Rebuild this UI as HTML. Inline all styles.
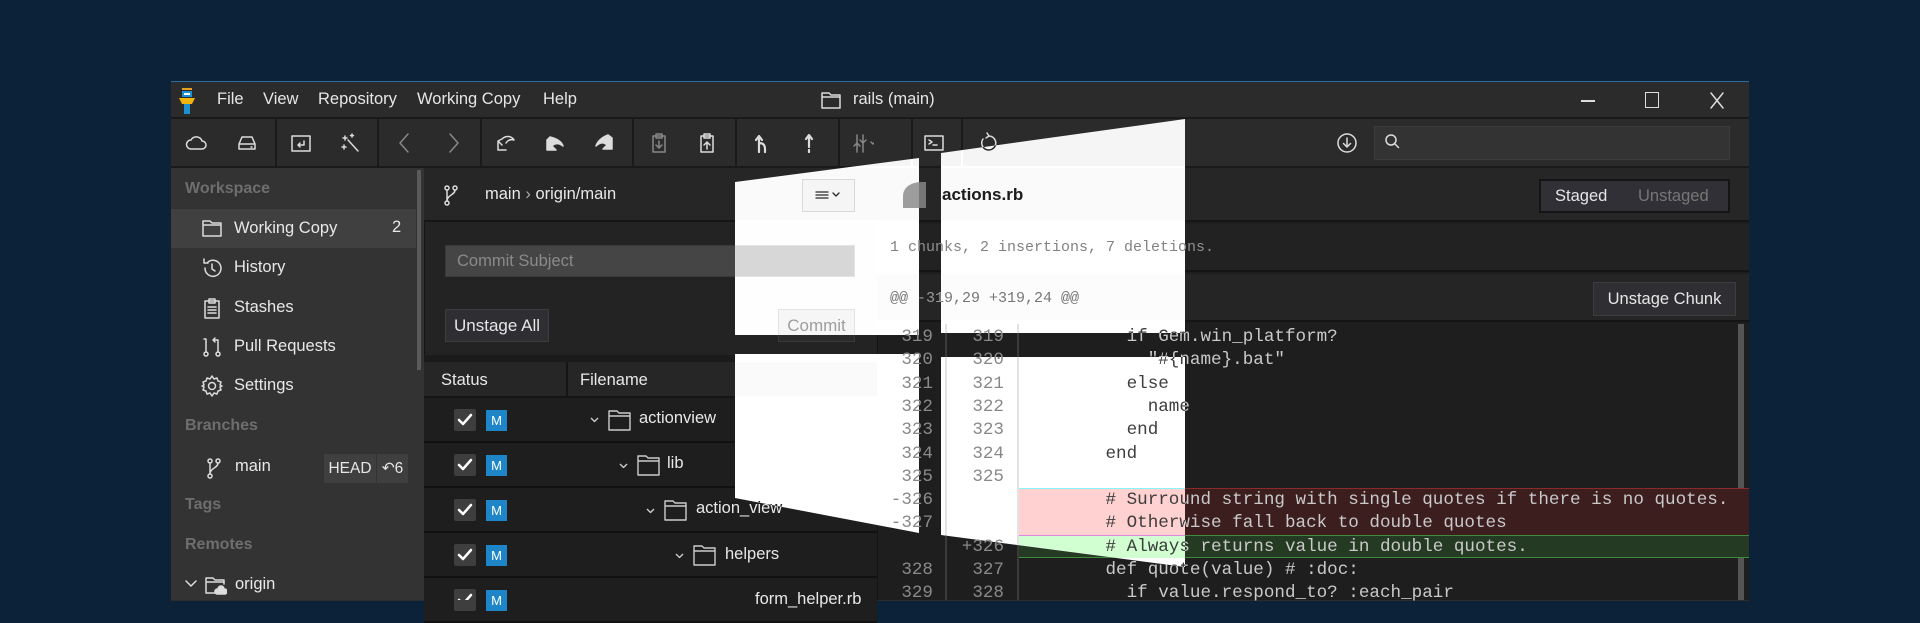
<!DOCTYPE html>
<html><head><meta charset="utf-8"><style>
*{box-sizing:border-box;margin:0;padding:0}
body{width:1920px;height:600px;background:#0b2239;position:relative;overflow:hidden;font-family:"Liberation Sans",sans-serif;color:#e6e6e6;font-size:16px}
.a{position:absolute}
.ic{position:absolute;width:24px;height:24px;fill:none;stroke:#dcdcdc;stroke-width:1.5;stroke-linecap:round;stroke-linejoin:round}
.vs{position:absolute;top:119px;width:2px;height:48px;background:#1a1a1a}
.h{position:absolute;color:#6e6e6e;font-weight:bold;font-size:16px}
.si{position:absolute;font-size:16.5px;color:#e8e8e8}
.row{position:absolute;left:424px;width:453px;height:45px;background:#1e1e1e;border-bottom:2px solid #111}
.cb{position:absolute;left:30px;top:11px;width:22px;height:22px;background:#3e3e3e;border-radius:2px}
.m{position:absolute;left:62px;top:12px;width:21px;height:21px;background:#1e86c8;color:#fff;font-size:13px;text-align:center;line-height:21px}
.mono{font-family:"Liberation Mono",monospace}
.cl{position:absolute;left:1019px;width:720px;height:23.3px;line-height:23.3px;font-size:17.6px;white-space:pre;color:#c9c9c9;padding-left:2px}
.n1,.n2{position:absolute;height:23.3px;line-height:23.3px;font-size:17.6px;color:#8a8a8a;text-align:right}
.n1{left:877px;width:56px}.n2{left:946px;width:58px}
</style></head><body>
<div class="a" style="left:171px;top:81px;width:1578px;height:520px;background:#2b2b2b;border-top:1px solid #2f6aa3"></div>
<svg class="a" style="left:179px;top:88px" width="16" height="26" viewBox="0 0 16 26"><rect x="3" y="0" width="10" height="2" fill="#e8a020"/><rect x="3" y="3" width="10" height="6" fill="#1e90d0"/><rect x="5" y="5" width="6" height="2" fill="#fff"/><path d="M0 10h16l-3 6H3z" fill="#f2b30c"/><rect x="5" y="16" width="6" height="10" fill="#1e90d0"/></svg>
<div class="a" style="left:217px;top:90px;font-size:16.5px">File</div>
<div class="a" style="left:263px;top:90px;font-size:16.5px">View</div>
<div class="a" style="left:318px;top:90px;font-size:16.5px">Repository</div>
<div class="a" style="left:417px;top:90px;font-size:16.5px">Working Copy</div>
<div class="a" style="left:543px;top:90px;font-size:16.5px">Help</div>
<svg class="ic" style="left:819px;top:88px"><path d="M3 5h7l2 2h9v13H3zM3 9h18"/></svg>
<div class="a" style="left:853px;top:90px;font-size:16.5px">rails (main)</div>
<div class="a" style="left:1581px;top:100px;width:14px;height:1.5px;background:#ddd"></div>
<div class="a" style="left:1645px;top:92px;width:14px;height:16px;border:1.5px solid #ddd"></div>
<svg class="ic" style="left:1705px;top:88px"><path d="M6 5l12 15M18 5L6 20"/></svg>
<div class="a" style="left:171px;top:117px;width:1578px;height:2px;background:#1a1a1a"></div>
<div class="a" style="left:171px;top:166px;width:1578px;height:2px;background:#1a1a1a"></div>
<div class="vs" style="left:275px"></div><div class="vs" style="left:377px"></div><div class="vs" style="left:480px"></div><div class="vs" style="left:632px"></div><div class="vs" style="left:735px"></div><div class="vs" style="left:838px"></div><div class="vs" style="left:911px"></div><div class="vs" style="left:961px"></div>
<svg class="ic" style="left:184px;top:131px"><path d="M7 18h11a4 4 0 0 0 0-8 6 6 0 0 0-11-1 4.5 4.5 0 0 0 0 9z"/></svg>
<svg class="ic" style="left:235px;top:131px"><path d="M4 13l3-7h10l3 7v5H4zM4 13h16M16 16h1"/></svg>
<svg class="ic" style="left:289px;top:131px"><path d="M3 5h18v15H3zM15 10v4h-6M11 12l-2 2 2 2"/></svg>
<svg class="ic" style="left:339px;top:131px"><path d="M9 9l10 11M6 5v4M4 7h4M13 3v3M11.5 4.5h3M5 14v4M3 16h4"/></svg>
<svg class="ic" style="left:393px;top:131px;stroke:#888"><path d="M15 3L7 12l8 9"/></svg>
<svg class="ic" style="left:441px;top:131px;stroke:#888"><path d="M9 3l8 9-8 9"/></svg>
<svg class="ic" style="left:494px;top:131px"><path d="M4 10v9h8M4 10l4 4M4 10l4-2c3-3 9-4 12 1-3-1-6 0-8 3"/></svg>
<svg class="ic" style="left:543px;top:131px;fill:#ddd"><path d="M4 9v10h9l-4-4c3-3 7-3 11 0-2-6-9-8-13-9z"/></svg>
<svg class="ic" style="left:592px;top:131px;fill:#ddd"><path d="M20 7v11h-9l4-4c-3-3-7-3-11 1 2-6 7-9 12-11z"/></svg>
<svg class="ic" style="left:647px;top:131px;stroke:#888"><path d="M6 5h12v16H6zM9 3h6v4H9zM12 10v7M9 14l3 3 3-3"/></svg>
<svg class="ic" style="left:695px;top:131px"><path d="M6 5h12v16H6zM9 3h6v4H9zM12 18v-7M9 14l3-3 3 3"/></svg>
<svg class="ic" style="left:750px;top:131px;stroke-width:2.2"><path d="M9 21V6M6 9l3-4 3 4M9 12c4 0 6 2 6 6v3"/></svg>
<svg class="ic" style="left:797px;top:131px;stroke-width:2.2"><path d="M12 21v-2M12 16V5M9 8l3-4 3 4"/></svg>
<svg class="ic" style="left:850px;top:131px;stroke:#888"><path d="M7 4v17M13 4v17M4 15l3-3 3 3M10 9l3 3 3-3M21 11l2 2 2-2"/></svg>
<svg class="ic" style="left:922px;top:131px"><path d="M3 5h18v14H3zM7 9l3 2-3 2M11 14h4"/></svg>
<svg class="ic" style="left:977px;top:131px"><path d="M12 5a7 7 0 1 1-6 3M12 5l-2-3M12 5l-3 2"/></svg>
<svg class="ic" style="left:1335px;top:131px"><circle cx="12" cy="12" r="9"/><path d="M12 7v9M8.5 12.5L12 16l3.5-3.5"/></svg>
<div class="a" style="left:1374px;top:126px;width:356px;height:34px;background:#333;border:1px solid #3c3c3c"></div>
<svg class="ic" style="left:1382px;top:131px;width:20px;height:20px"><circle cx="9" cy="9" r="5"/><path d="M12.5 12.5l4 4"/></svg>
<div class="a" style="left:171px;top:168px;width:253px;height:432px;background:#333"></div>
<div class="a" style="left:171px;top:209px;width:245px;height:39px;background:#404040"></div>
<div class="a" style="left:417px;top:170px;width:4px;height:200px;background:#5a5a5a"></div>
<div class="h" style="left:185px;top:180px">Workspace</div>
<svg class="ic" style="left:200px;top:216px"><path d="M3 5h7l2 2h9v13H3zM3 9h18"/></svg>
<div class="si" style="left:234px;top:219px">Working Copy</div>
<div class="si" style="left:392px;top:218px">2</div>
<svg class="ic" style="left:200px;top:256px"><path d="M5 12a8 8 0 1 0 2.5-5.5M4 3v4h4M12 8v5l3 2"/></svg>
<div class="si" style="left:234px;top:258px">History</div>
<svg class="ic" style="left:200px;top:296px"><path d="M5 5h14v17H5zM9 3h6v4H9zM8 11h8M8 14h8M8 17h8"/></svg>
<div class="si" style="left:234px;top:298px">Stashes</div>
<svg class="ic" style="left:200px;top:335px"><circle cx="6" cy="19" r="2"/><circle cx="18" cy="19" r="2"/><path d="M6 17V4M4 4h2M18 17V5h-4M15 3l-2 2 2 2"/></svg>
<div class="si" style="left:234px;top:337px">Pull Requests</div>
<svg class="ic" style="left:200px;top:374px"><circle cx="12" cy="12" r="3.5"/><path d="M12 2l2 3 3-1 1 3 3 1-1 3 2 1-2 1 1 3-3 1-1 3-3-1-2 3-2-3-3 1-1-3-3-1 1-3-2-1 2-1-1-3 3-1 1-3 3 1z"/></svg>
<div class="si" style="left:234px;top:376px">Settings</div>
<div class="h" style="left:185px;top:417px">Branches</div>
<svg class="ic" style="left:203px;top:456px"><circle cx="7" cy="5" r="2"/><circle cx="15" cy="5" r="2"/><circle cx="7" cy="20" r="2"/><path d="M7 7v11M15 7c0 5-8 5-8 11"/></svg>
<div class="si" style="left:235px;top:457px">main</div>
<div class="a" style="left:324px;top:454px;width:52px;height:29px;background:#3f3f3f;font-size:15.5px;text-align:center;line-height:29px">HEAD</div>
<div class="a" style="left:377px;top:454px;width:31px;height:29px;background:#3f3f3f;font-size:15.5px;text-align:center;line-height:29px">↶6</div>
<div class="h" style="left:185px;top:496px">Tags</div>
<div class="h" style="left:185px;top:536px">Remotes</div>
<svg class="ic" style="left:183px;top:575px;width:16px;height:16px"><path d="M3 6l5 5 5-5"/></svg>
<svg class="ic" style="left:203px;top:573px"><path d="M3 5h7l2 2h9v4M3 5v15h9M3 9h18"/><path d="M14 21h8a2.5 2.5 0 0 0-1-5 3 3 0 0 0-6 0 2.5 2.5 0 0 0-1 5z" fill="#ddd"/></svg>
<div class="si" style="left:235px;top:575px">origin</div>
<div class="a" style="left:424px;top:168px;width:453px;height:432px;background:#232323;border-left:1px solid #151515"></div>
<div class="a" style="left:424px;top:168px;width:453px;height:54px;background:#262626;border-bottom:2px solid #151515"></div>
<svg class="ic" style="left:440px;top:183px"><circle cx="7" cy="5" r="2"/><circle cx="15" cy="5" r="2"/><circle cx="7" cy="20" r="2"/><path d="M7 7v11M15 7c0 5-8 5-8 11"/></svg>
<div class="si" style="left:485px;top:185px">main <span style="color:#aaa">›</span> origin/main</div>
<div class="a" style="left:802px;top:179px;width:53px;height:33px;background:#2b2b2b;border:1.5px solid #444"></div>
<svg class="ic" style="left:814px;top:184px;width:30px;height:22px;stroke-width:1.3"><path d="M2 8h12M2 11h12M2 14h12M19 9l3 3 3-3"/></svg>
<div class="a" style="left:445px;top:245px;width:410px;height:32px;background:#454545;color:#8a8a8a;font-size:16.5px;padding:6px 11px;border:1px solid #3a3a3a">Commit Subject</div>
<div class="a" style="left:445px;top:309px;width:104px;height:33px;background:#2f2f33;border:1px solid #3d3d3d;font-size:17px;text-align:center;line-height:31px">Unstage All</div>
<div class="a" style="left:778px;top:309px;width:77px;height:33px;background:#2a2a2a;border:1px solid #3a3a3a;color:#777;font-size:17px;text-align:center;line-height:31px">Commit</div>
<div class="a" style="left:424px;top:355px;width:453px;height:7px;background:#1b1b1b"></div>
<div class="a" style="left:424px;top:362px;width:453px;height:36px;background:#262626;border-bottom:2px solid #151515"></div>
<div class="a" style="left:566px;top:362px;width:2px;height:36px;background:#151515"></div>
<div class="si" style="left:441px;top:371px">Status</div>
<div class="si" style="left:580px;top:371px">Filename</div>
<div class="row" style="top:398px"><div class="cb"></div><div class="m">M</div></div>
<div class="row" style="top:443px"><div class="cb"></div><div class="m">M</div></div>
<div class="row" style="top:488px"><div class="cb"></div><div class="m">M</div></div>
<div class="row" style="top:533px"><div class="cb"></div><div class="m">M</div></div>
<div class="row" style="top:578px"><div class="cb"></div><div class="m">M</div></div>
<svg class="a" style="left:424px;top:398px" width="453" height="202" fill="none" stroke="#fff" stroke-width="2.5" stroke-linecap="round" stroke-linejoin="round"><path d="M35 22l4 4 8-9M35 67l4 4 8-9M35 112l4 4 8-9M35 157l4 4 8-9M35 202l4 4 8-9"/></svg>
<svg class="a" style="left:424px;top:398px" width="453" height="202" fill="none" stroke="#ccc" stroke-width="1.4" stroke-linejoin="round"><path d="M167 20l3.5 3.5 3.5-3.5M196 66l3.5 3.5 3.5-3.5M223 111l3.5 3.5 3.5-3.5M252 156l3.5 3.5 3.5-3.5"/><path d="M185 13h8l2 2h11v17h-21zM185 18h21M214 58h8l2 2h11v17h-21zM214 63h21M241 103h8l2 2h11v17h-21zM241 108h21M270 148h8l2 2h11v17h-21zM270 153h21"/></svg>
<div class="si" style="left:639px;top:409px">actionview</div>
<div class="si" style="left:667px;top:454px">lib</div>
<div class="si" style="left:696px;top:499px">action_view</div>
<div class="si" style="left:725px;top:545px">helpers</div>
<div class="si" style="left:755px;top:590px">form_helper.rb</div>
<div class="a" style="left:877px;top:168px;width:872px;height:432px;background:#1e1e1e;border-left:1px solid #151515"></div>
<div class="a" style="left:877px;top:168px;width:872px;height:54px;background:#262626;border-bottom:2px solid #151515"></div>
<svg class="a" style="left:900px;top:180px" width="28" height="30"><path d="M3 28V16C3 8 10 2 22 2h4v26z" fill="#777"/></svg>
<div class="a" style="left:942px;top:185px;font-size:17px;font-weight:bold">actions.rb</div>
<div class="a" style="left:1539px;top:179px;width:191px;height:34px;background:#303036;border:2px solid #151515"></div>
<div class="a" style="left:1555px;top:187px;font-size:16.5px">Staged</div>
<div class="a" style="left:1638px;top:187px;font-size:16.5px;color:#777">Unstaged</div>
<div class="a" style="left:877px;top:224px;width:872px;height:48px;background:#222;border-bottom:2px solid #151515"></div>
<div class="a mono" style="left:890px;top:239px;font-size:15px;color:#8f8f8f">1 chunks, 2 insertions, 7 deletions.</div>
<div class="a" style="left:877px;top:274px;width:872px;height:48px;background:#252525;border-bottom:2px solid #151515"></div>
<div class="a mono" style="left:890px;top:290px;font-size:15px;color:#999">@@ -319,29 +319,24 @@</div>
<div class="a" style="left:1593px;top:282px;width:143px;height:34px;background:#2f2f33;border:1px solid #3d3d3d;font-size:16.5px;text-align:center;line-height:32px">Unstage Chunk</div>
<div class="a" style="left:945px;top:324px;width:1.5px;height:276px;background:#3a3a3a"></div>
<div class="a" style="left:1017px;top:324px;width:1.5px;height:276px;background:#3a3a3a"></div>
<div class="a" style="left:1738px;top:324px;width:6px;height:276px;background:#555"></div>
<div class="a" style="left:1019px;top:488px;width:730px;height:47px;background:#3c1e1f;border-top:1px solid #8a2a2a"></div>
<div class="a" style="left:1019px;top:535px;width:730px;height:23px;background:#253a22;border-top:1px solid #3f8a3f;border-bottom:1px solid #3f8a3f"></div>
<svg class="a" style="left:0;top:0" width="1920" height="600"><rect x="1019" y="489" width="166" height="46" fill="#204a4a"/><polygon points="1019,536 1185,536 1185,558 1116,558 1019,545" fill="#4a204a"/></svg>
<div class="mono">
<div class="n1" style="top:326px">319</div><div class="n2" style="top:326px">319</div><div class="cl" style="top:326px">          if Gem.win_platform?</div>
<div class="n1" style="top:349.3px">320</div><div class="n2" style="top:349.3px">320</div><div class="cl" style="top:349.3px">            "#{name}.bat"</div>
<div class="n1" style="top:372.6px">321</div><div class="n2" style="top:372.6px">321</div><div class="cl" style="top:372.6px">          else</div>
<div class="n1" style="top:395.9px">322</div><div class="n2" style="top:395.9px">322</div><div class="cl" style="top:395.9px">            name</div>
<div class="n1" style="top:419.2px">323</div><div class="n2" style="top:419.2px">323</div><div class="cl" style="top:419.2px">          end</div>
<div class="n1" style="top:442.5px">324</div><div class="n2" style="top:442.5px">324</div><div class="cl" style="top:442.5px">        end</div>
<div class="n1" style="top:465.8px">325</div><div class="n2" style="top:465.8px">325</div>
<div class="n1" style="top:489.1px">-326</div><div class="cl" style="top:489.1px">        # Surround string with single quotes if there is no quotes.</div>
<div class="n1" style="top:512.4px">-327</div><div class="cl" style="top:512.4px">        # Otherwise fall back to double quotes</div>
<div class="n2" style="top:535.7px">+326</div><div class="cl" style="top:535.7px">        # Always returns value in double quotes.</div>
<div class="n1" style="top:559px">328</div><div class="n2" style="top:559px">327</div><div class="cl" style="top:559px">        def quote(value) # :doc:</div>
<div class="n1" style="top:582.3px">329</div><div class="n2" style="top:582.3px">328</div><div class="cl" style="top:582.3px">          if value.respond_to? :each_pair</div>
</div>
<svg class="a" style="left:0;top:0;mix-blend-mode:difference" width="1920" height="600"><g fill="#fff"><polygon points="735,182 919,158 919,335 735,335"/><polygon points="735,354 919,354 919,533 735,498"/><polygon points="941,153 1185,119 1185,333 941,333"/><polygon points="941,357 1185,357 1185,567 941,535"/></g></svg>
<svg class="a" style="left:0;top:0;mix-blend-mode:color-dodge" width="1920" height="600"><g fill="#222"><polygon points="735,182 919,158 919,335 735,335"/><polygon points="735,354 919,354 919,533 735,498"/><polygon points="941,153 1185,119 1185,333 941,333"/><polygon points="941,357 1185,357 1185,567 941,535"/></g></svg>
</body></html>
